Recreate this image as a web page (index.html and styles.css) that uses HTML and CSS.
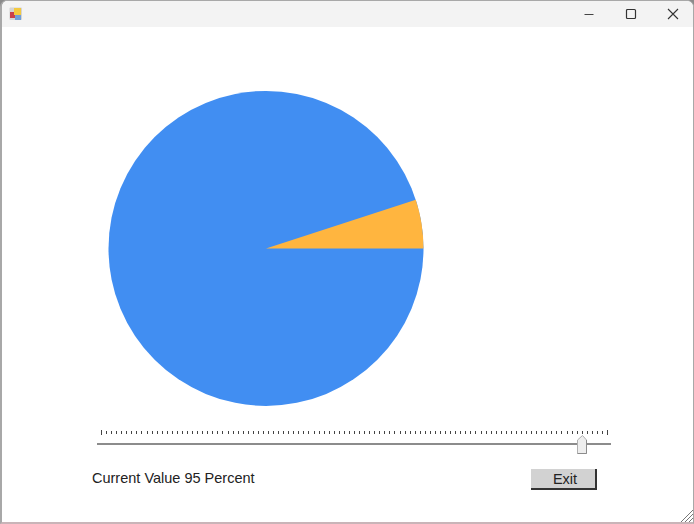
FILE: index.html
```html
<!DOCTYPE html>
<html lang="en">
<head>
    <meta charset="UTF-8">
    <meta name="viewport" content="width=device-width, initial-scale=1.0">
    <title>Pie Slider</title>
    <link rel="stylesheet" href="styles.css">
</head>
<body>
    <div class="window">
        <div class="titlebar">
            <svg class="app-icon" width="14" height="14" viewBox="0 0 14 14">
                <rect x="0.5" y="0.5" width="12.5" height="12.5" rx="1" fill="#d4d4d4"/>
                <rect x="1" y="5" width="5" height="6" fill="#c9404a"/>
                <rect x="5" y="1" width="7" height="7" fill="#f3c93f"/>
                <rect x="6" y="8" width="6" height="5" fill="#6f9fd8"/>
            </svg>
            <div class="caption-buttons">
                <svg width="12" height="12" viewBox="0 0 12 12"><path d="M1.5 6.5h9" stroke="#444" fill="none"/></svg>
                <svg width="12" height="12" viewBox="0 0 12 12"><rect x="1.5" y="1.5" width="9" height="9" rx="1" stroke="#333" stroke-width="1.2" fill="none"/></svg>
                <svg width="12" height="12" viewBox="0 0 12 12"><path d="M1 1l10 10M11 1L1 11" stroke="#333" stroke-width="1.1" fill="none"/></svg>
            </div>
        </div>

        <div class="client">
            <svg class="pie" width="316" height="316" viewBox="0 0 316 316">
                <circle cx="158" cy="158.4" r="157.5" fill="#418ef2"/>
                <path d="M158 158.4 L307.8 109.7 A157.5 157.5 0 0 1 315.5 158.4 Z" fill="#ffb53f"/>
            </svg>

            <div class="slider">
                <div class="ticks"></div>
                <div class="track"></div>
                <svg class="thumb" width="11" height="19" viewBox="0 0 11 19">
                    <path d="M0.5 5 L5.5 0.5 L9.5 5 V18.5 H0.5 Z" fill="#eeeeee" stroke="#b0b0b0"/>
                    <path d="M9.5 5 V18.5 H0.5" stroke="#8c8c8c" fill="none"/>
                </svg>
            </div>

            <div class="bottom-row">
                <span class="value-label">Current Value 95 Percent</span>
                <button class="exit-btn">Exit</button>
            </div>
        </div>

        <svg class="grip" width="14" height="14" viewBox="0 0 14 14">
            <path d="M14 2L2 14M14 6L6 14M14 10L10 14" stroke="#777" fill="none"/>
        </svg>
    </div>
</body>
</html>
```

FILE: styles.css
```css
html, body {
    margin: 0;
    height: 100%;
    background-color: #8a8a8a;
    overflow: hidden;
}
.window {
    position: relative;
    box-sizing: border-box;
    height: 524px;
    background-color: white;
    border: 1px solid #a8a8a8;
    border-left-width: 2px;
    border-bottom: 2px solid #c9b4b8;
    border-radius: 7px 7px 0 0;
    overflow: hidden;
}
.titlebar {
    display: flex;
    align-items: center;
    justify-content: space-between;
    height: 26px;
    padding-left: 7px;
    background-color: #f3f3f3;
}
.caption-buttons {
    display: flex;
    gap: 30px;
    padding-right: 14px;
}
.client {
    display: flex;
    flex-direction: column;
    padding-left: 90px;
}
.pie {
    margin: 63px 0 0 16px;
}
.slider {
    position: relative;
    width: 514px;
    height: 26px;
    margin: 24px 0 0 5px;
}
.ticks {
    height: 5px;
    width: 507px;
    margin-left: 4px;
    background-image:
        linear-gradient(#444, #444),
        linear-gradient(#444, #444),
        repeating-linear-gradient(to right, #444 0, #444 1px, transparent 1px, transparent 5.06px);
    background-size: 1px 5px, 1px 5px, 100% 3px;
    background-position: 0 0, 100% 0, 0 1px;
    background-repeat: no-repeat;
}
.track {
    height: 2px;
    margin-top: 8px;
    background-color: #8c8c8c;
}
.thumb {
    position: absolute;
    left: 480px;
    top: 5px;
}
.bottom-row {
    display: flex;
    align-items: center;
    justify-content: space-between;
    width: 505px;
    margin-top: 13px;
}
.value-label {
    padding-bottom: 4px;
    font-family: "Liberation Sans", Arial, sans-serif;
    font-size: 14.5px;
    color: #222;
}
.exit-btn {
    box-sizing: border-box;
    width: 66px;
    height: 21px;
    padding: 1px 0 0 4px;
    font-family: "Liberation Sans", Arial, sans-serif;
    font-size: 14.5px;
    color: #222;
    background-color: #d2d2d2;
    border: none;
    border-right: 2px solid #333;
    border-bottom: 2px solid #333;
}
.grip {
    position: absolute;
    right: 0;
    bottom: 0;
}
```
